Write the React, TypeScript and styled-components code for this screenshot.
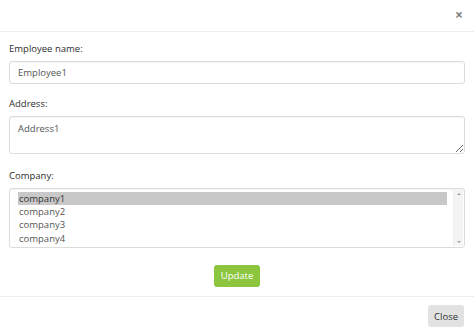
import React from "react";
import styled, { createGlobalStyle } from "styled-components";

const GlobalStyle = createGlobalStyle`
  html, body {
    margin: 0;
    padding: 0;
    background: #fff;
  }
  body {
    font-family: "Open Sans", Lato, sans-serif;
    font-size: 9.5px;
    color: #333;
  }
  * {
    box-sizing: border-box;
  }
`;

const font = `font-family: "Open Sans", Lato, sans-serif; font-size: 9.5px;`;

const Modal = styled.div`
  width: 474px;
  height: 336px;
  display: flex;
  flex-direction: column;
  background: #fff;
`;

const Header = styled.div`
  height: 33px;
  border-bottom: 1px solid #ececec;
  display: flex;
  align-items: center;
  justify-content: flex-end;
  padding: 0 11px 1px;
`;

const CloseX = styled.button`
  border: 0;
  background: transparent;
  padding: 0;
  font-family: "Open Sans", sans-serif;
  font-size: 14px;
  font-weight: 700;
  line-height: 1;
  color: #000;
  opacity: 0.5;
  cursor: pointer;
`;

const Body = styled.div`
  padding: 9px 9px 9px;
  display: flex;
  flex-direction: column;
`;

const Group = styled.div<{ gap?: number }>`
  display: flex;
  flex-direction: column;
  margin-bottom: ${(p) => p.gap ?? 12}px;
`;

const Label = styled.label`
  line-height: 16px;
  margin-bottom: 4px;
  color: #2e2e2e;
`;

const fieldStyle = `
  width: 100%;
  border: 1px solid #dcdcdc;
  border-radius: 3px;
  background: #fff;
  color: #555;
  ${font}
  padding: 4px 8px;
  outline: none;
  box-shadow: inset 0 1px 1px rgba(0, 0, 0, 0.04);
`;

const Input = styled.input`
  ${fieldStyle}
  height: 23px;
`;

const TextArea = styled.textarea`
  ${fieldStyle}
  height: 38px;
  padding-top: 5px;
  resize: vertical;
  display: block;
`;

const ListBox = styled.div`
  ${fieldStyle}
  height: 60px;
  padding: 3px 1px 1px 8px;
  display: flex;
  overflow: hidden;
`;

const Options = styled.div`
  flex: 1;
  display: flex;
  flex-direction: column;
  padding-right: 6px;
`;

const Option = styled.div<{ selected?: boolean }>`
  height: 13.3px;
  line-height: 13.3px;
  padding-left: 1px;
  flex-shrink: 0;
  color: ${(p) => (p.selected ? "#333" : "#555")};
  background: ${(p) => (p.selected ? "#c8c8c8" : "transparent")};
`;

const Scrollbar = styled.div`
  width: 10px;
  margin-top: -2px;
  display: flex;
  flex-direction: column;
  justify-content: space-between;
  align-items: center;
  background: #f4f4f4;
  border-left: 1px solid #eeeeee;
  padding: 3px 0;
`;

const Arrow = styled.span<{ down?: boolean }>`
  width: 0;
  height: 0;
  border-left: 2px solid transparent;
  border-right: 2px solid transparent;
  ${(p) =>
    p.down ? "border-top: 2px solid #a0a0a0;" : "border-bottom: 2px solid #a0a0a0;"}
`;

const Actions = styled.div`
  display: flex;
  justify-content: center;
  margin-top: 3px;
`;

const Button = styled.button<{ variant?: "primary" | "default" }>`
  border: 0;
  border-radius: 3px;
  height: 22px;
  padding: 0 ${(p) => (p.variant === "primary" ? 7 : 6)}px;
  ${font}
  cursor: pointer;
  background: ${(p) => (p.variant === "primary" ? "#8cc63f" : "#e2e2e2")};
  color: ${(p) => (p.variant === "primary" ? "#fff" : "#333")};
`;

const Footer = styled.div`
  margin-top: auto;
  border-top: 1px solid #ececec;
  height: 42px;
  display: flex;
  align-items: center;
  justify-content: flex-end;
  padding: 0 10px;
`;

const companies = ["company1", "company2", "company3", "company4"];

export default function App() {
  return (
    <>
      <GlobalStyle />
      <Modal>
        <Header>
          <CloseX aria-label="Close">×</CloseX>
        </Header>
        <Body>
          <Group>
            <Label>Employee name:</Label>
            <Input defaultValue="Employee1" />
          </Group>
          <Group gap={14}>
            <Label>Address:</Label>
            <TextArea defaultValue="Address1" />
          </Group>
          <Group gap={14}>
            <Label>Company:</Label>
            <ListBox role="listbox">
              <Options>
                {companies.map((c, i) => (
                  <Option key={c} role="option" selected={i === 0} aria-selected={i === 0}>
                    {c}
                  </Option>
                ))}
              </Options>
              <Scrollbar>
                <Arrow />
                <Arrow down />
              </Scrollbar>
            </ListBox>
          </Group>
          <Actions>
            <Button variant="primary">Update</Button>
          </Actions>
        </Body>
        <Footer>
          <Button>Close</Button>
        </Footer>
      </Modal>
    </>
  );
}
